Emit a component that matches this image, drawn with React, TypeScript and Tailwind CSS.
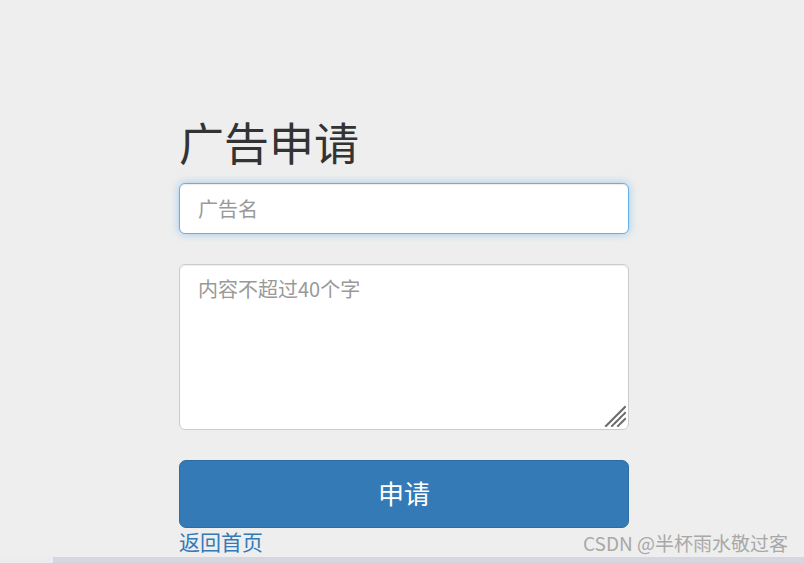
import React from "react";

const cjk = { fontFamily: '"Noto Sans CJK SC", "Liberation Sans", sans-serif' };

export default function App() {
  return (
    <div className="relative flex h-[563px] w-[804px] flex-col overflow-hidden bg-[#eeeeee]" style={cjk}>
      <div className="flex-1 pl-[179px] pt-[113px]">
        <div className="flex w-[450px] flex-col">
          <h1 className="h-[70px] text-[45px] leading-[57px] font-normal text-[#333333]">广告申请</h1>
          <input
            className="h-[51px] w-full rounded-[6px] border border-[#66afe9] bg-white px-[18px] text-[20px] text-[#555] outline-none shadow-[inset_0_1px_1px_rgba(0,0,0,0.075),0_0_8px_rgba(102,175,233,0.6)] placeholder:text-[#999999]"
            placeholder="广告名"
          />
          <div className="relative mt-[30px] h-[166px] w-full">
            <textarea
              className="h-full w-full resize-none rounded-[6px] border border-[#cccccc] bg-white px-[18px] py-[9px] text-[20px] leading-[30px] text-[#555] outline-none shadow-[inset_0_1px_1px_rgba(0,0,0,0.075)] placeholder:text-[#999999]"
              placeholder="内容不超过40个字"
            />
            <svg className="pointer-events-none absolute bottom-[3px] right-[3px]" width="22" height="22" viewBox="0 0 22 22">
              <g stroke="#6b6b6b" strokeWidth="2" strokeLinecap="square">
                <line x1="2" y1="21" x2="21" y2="2" />
                <line x1="8" y1="21" x2="21" y2="8" strokeDasharray="3 1.5" />
                <line x1="14" y1="21" x2="21" y2="14" strokeDasharray="3 1.5" />
              </g>
            </svg>
          </div>
          <button className="mt-[30px] h-[68px] w-full rounded-[7px] border border-[#2e6da4] bg-[#337ab7] pb-[3px] text-[26px] text-white">
            申请
          </button>
          <a className="mt-[-2px] text-[21px] leading-[30px] text-[#337ab7]" href="#">
            返回首页
          </a>
        </div>
      </div>
      <div className="flex h-[6px]">
        <div className="w-[53px] bg-[#ebebf0]" />
        <div className="flex-1 bg-[#d6d6e0]" />
      </div>
      <div className="absolute right-[16px] top-[530px] text-[19px] leading-[26px] text-[#a8a8a8]">
        CSDN @半杯雨水敬过客
      </div>
    </div>
  );
}
